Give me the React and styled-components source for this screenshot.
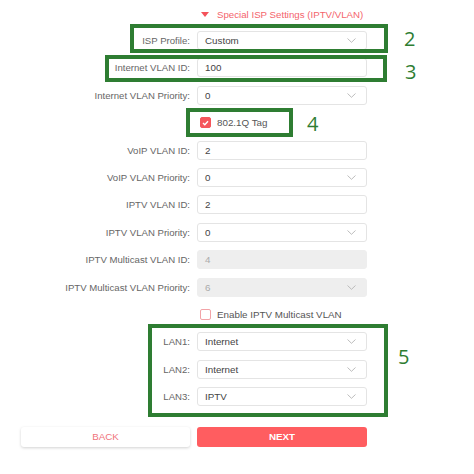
import React from "react"
import styled, { createGlobalStyle } from "styled-components"

const GlobalStyle = createGlobalStyle`
  body {
    margin: 0;
    background: #ffffff;
    font-family: "Liberation Sans", Arial, sans-serif;
  }
`

const Page = styled.div`
  width: 474px;
  height: 474px;
  padding-top: 8px;
  box-sizing: border-box;
  overflow: hidden;
  background: #ffffff;
`

const Header = styled.div`
  display: flex;
  align-items: center;
  height: 12px;
  margin: 0 0 11px 201px;
  gap: 8px;
  color: #f4646c;
  font-size: 9.7px;
`

const Triangle = styled.span`
  width: 0;
  height: 0;
  border-left: 4px solid transparent;
  border-right: 4px solid transparent;
  border-top: 5px solid #f4525a;
`

const Form = styled.div`
  display: flex;
  flex-direction: column;
  gap: 8.4px;
`

const Group = styled.div`
  position: relative;
  display: flex;
  flex-direction: column;
  gap: 8.4px;
`

const Row = styled.div`
  position: relative;
  display: flex;
  align-items: center;
  gap: 7px;
  height: 19px;
`

const Label = styled.div`
  width: 190px;
  flex-shrink: 0;
  text-align: right;
  color: #666666;
  font-size: 9.6px;
  white-space: nowrap;
`

const Field = styled.div`
  width: 170px;
  height: 19px;
  box-sizing: border-box;
  display: flex;
  align-items: center;
  justify-content: space-between;
  padding: 0 10px 0 7px;
  border: 1px solid ${(p) => (p.$disabled ? "#eeeeee" : "#e4e4e4")};
  border-radius: 3px;
  background: ${(p) => (p.$disabled ? "#eeeeee" : "#ffffff")};
  color: ${(p) => (p.$disabled ? "#ababab" : "#444444")};
  font-size: 9.8px;
`

const Check = styled.label`
  display: flex;
  align-items: center;
  gap: 6px;
  margin-left: 3px;
  color: #555555;
  font-size: 9.8px;
`

const Box = styled.span`
  width: 11px;
  height: 11px;
  box-sizing: border-box;
  border-radius: 2px;
  display: flex;
  align-items: center;
  justify-content: center;
  background: ${(p) => (p.$checked ? "#f5565c" : "#ffffff")};
  border: 1px solid ${(p) => (p.$checked ? "#f5565c" : "#f2a3a7")};
`

const Callout = styled.div`
  position: absolute;
  left: ${(p) => p.$left}px;
  top: ${(p) => p.$top}px;
  width: ${(p) => p.$width}px;
  height: ${(p) => p.$height}px;
  box-sizing: border-box;
  border: 4px solid #2e7d32;
  pointer-events: none;
`

const Num = styled.div`
  position: absolute;
  left: ${(p) => p.$left}px;
  top: ${(p) => p.$top}px;
  line-height: 20px;
  transform: translateY(-50%);
  color: #2e7d32;
  font-family: "Open Sans", "Noto Sans", sans-serif;
  font-size: 20px;
`

const Buttons = styled.div`
  display: flex;
  gap: 7px;
  margin-top: 20.8px;
  padding-left: 21px;
`

const Button = styled.button`
  height: 20px;
  border: none;
  border-radius: 3px;
  font-family: "Liberation Sans", Arial, sans-serif;
  font-size: 9.8px;
  padding: 0;
`

const BackButton = styled(Button)`
  width: 169px;
  background: #ffffff;
  color: #f0737b;
  box-shadow: 0 1px 3px rgba(0, 0, 0, 0.18);
`

const NextButton = styled(Button)`
  width: 170px;
  background: #ff5d60;
  color: #ffffff;
  font-weight: bold;
`

const Chevron = () => (
  <svg width="9" height="5" viewBox="0 0 9 5">
    <path d="M0.5 0.5 L4.5 4.3 L8.5 0.5" fill="none" stroke="#b5b5b5" strokeWidth="0.9" />
  </svg>
)

const Tick = () => (
  <svg width="7" height="6" viewBox="0 0 7 6">
    <path d="M1 3 L2.8 4.7 L6 1.2" fill="none" stroke="#ffffff" strokeWidth="1.4" />
  </svg>
)

const Input = ({ label, value, disabled, children }) => (
  <Row>
    <Label>{label}</Label>
    <Field $disabled={disabled}>
      <span>{value}</span>
    </Field>
    {children}
  </Row>
)

const Select = ({ label, value, disabled, children }) => (
  <Row>
    <Label>{label}</Label>
    <Field $disabled={disabled}>
      <span>{value}</span>
      <Chevron />
    </Field>
    {children}
  </Row>
)

const CheckRow = ({ text, checked, children }) => (
  <Row>
    <Label />
    <Check>
      <Box $checked={checked}>{checked && <Tick />}</Box>
      {text}
    </Check>
    {children}
  </Row>
)

const App = () => {
  return (
    <Page>
      <GlobalStyle />
      <Header>
        <Triangle />
        Special ISP Settings (IPTV/VLAN)
      </Header>
      <Form>
        <Select label="ISP Profile:" value="Custom">
          <Callout $left={130} $top={-7} $width={258} $height={29} />
          <Num $left={404} $top={8}>2</Num>
        </Select>
        <Input label="Internet VLAN ID:" value="100">
          <Callout $left={105} $top={-3} $width={282} $height={27} />
          <Num $left={405} $top={13.5}>3</Num>
        </Input>
        <Select label="Internet VLAN Priority:" value="0" />
        <CheckRow text="802.1Q Tag" checked>
          <Callout $left={186} $top={-5} $width={107} $height={29} />
          <Num $left={307} $top={11}>4</Num>
        </CheckRow>
        <Input label="VoIP VLAN ID:" value="2" />
        <Select label="VoIP VLAN Priority:" value="0" />
        <Input label="IPTV VLAN ID:" value="2" />
        <Select label="IPTV VLAN Priority:" value="0" />
        <Input label="IPTV Multicast VLAN ID:" value="4" disabled />
        <Select label="IPTV Multicast VLAN Priority:" value="6" disabled />
        <CheckRow text="Enable IPTV Multicast VLAN" />
        <Group>
          <Select label="LAN1:" value="Internet" />
          <Select label="LAN2:" value="Internet" />
          <Select label="LAN3:" value="IPTV" />
          <Callout $left={148} $top={-8} $width={240} $height={93} />
          <Num $left={398} $top={25}>5</Num>
        </Group>
      </Form>
      <Buttons>
        <BackButton>BACK</BackButton>
        <NextButton>NEXT</NextButton>
      </Buttons>
    </Page>
  )
}

export default App
